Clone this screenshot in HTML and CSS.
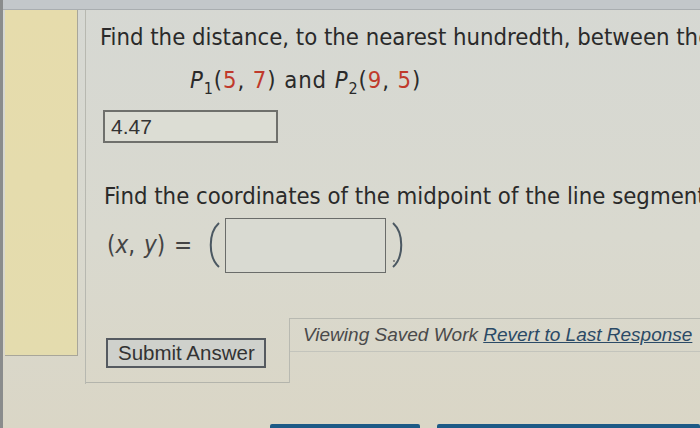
FILE: index.html
```html
<!DOCTYPE html>
<html>
<head>
<meta charset="utf-8">
<link rel="stylesheet" href="styles.css">
</head>
<body>
<div class="page">
  <div class="topbar"></div>
  <div class="main">
    <div class="side"></div>
    <div class="question">
      <p class="q q1">Find the distance, to the nearest hundredth, between the points</p>
      <p class="q points"><i>P</i><sub>1</sub>(<span class="num">5</span>, <span class="num">7</span>) and <i>P</i><sub>2</sub>(<span class="num">9</span>, <span class="num">5</span>)</p>
      <div class="answer">4.47</div>
      <p class="q q2">Find the coordinates of the midpoint of the line segment</p>
      <div class="mid">
        <span class="xy">(<i>x</i>, <i>y</i>) =</span>
        <svg class="paren" width="18" height="48" viewBox="0 0 18 48"><path d="M15 2 C4 12 4 36 15 46" fill="none" stroke="#4b5862" stroke-width="2"/></svg>
        <span class="box"></span>
        <svg class="paren pc" width="18" height="48" viewBox="0 0 18 48"><path d="M3 2 C14 12 14 36 3 46" fill="none" stroke="#4b5862" stroke-width="2"/><circle cx="4" cy="40" r="0.9" fill="#666"/></svg>
      </div>
      <div class="bottom">
        <div class="submitwrap"><span class="submit">Submit Answer</span></div>
        <div class="savedcol">
          <div class="saved"><i>Viewing Saved Work</i> <a class="revert">Revert to Last Response</a></div>
        </div>
      </div>
    </div>
  </div>
  <div class="footer"><span class="tab t1"></span><span class="tab t2"></span></div>
</div>
</body>
</html>
```
FILE: styles.css
```css
html, body { margin: 0; padding: 0; }
body {
  width: 700px; height: 428px; overflow: hidden;
  background: linear-gradient(180deg, #d6d8d3 0%, #d9d9cf 55%, #dad6c6 100%);
  font-family: "DejaVu Sans Condensed", "DejaVu Sans", sans-serif;
  color: #2a2a2a;
}
.page { width: 700px; height: 428px; display: flex; flex-direction: column; border-left: 3px solid #8a8c8c; box-sizing: border-box; }
.topbar { height: 9px; background: #c3c7ca; border-bottom: 1px solid #a9adb0; flex: none; }
.main { display: flex; flex: none; height: 374px; }
.side {
  width: 72px; height: 345px; margin-left: 2px; flex: none;
  background: linear-gradient(180deg, #e6dcac 0%, #e4dcae 100%);
  border-right: 1px solid #a8a69a; border-bottom: 1px solid #a8a69a;
}
.question {
  flex: 1; margin-left: 7px; border-left: 1px solid #b7b8b0;
  padding-left: 14px; white-space: nowrap; overflow: hidden;
}
.q { margin: 0; font-size: 23.7px; line-height: 28px; }
.q1 { margin-top: 13px; }
.points { margin: 15px 0 0 90px; letter-spacing: 0.9px; }
.points sub { font-size: 16px; line-height: 0; }
.num { color: #c0392b; }
.answer {
  margin: 16px 0 0 3px; width: 165px; height: 29px; border: 2px solid #6f706c;
  font-family: "Liberation Sans", Arial, sans-serif; font-size: 21px; line-height: 30px;
  padding-left: 6px; background: #dcddd4; color: #333;
}
.q2 { margin-top: 39px; margin-left: 4px; }
.mid { display: flex; align-items: center; margin: 7px 0 0 7px; height: 56px; }
.xy { font-size: 24px; color: #444; word-spacing: 2px; }
.paren { flex: none; margin-left: 12px; }
.pc { margin-left: 4px; }
.box { width: 159px; height: 53px; border: 1px solid #6a6c6a; margin-left: 3px; background: #d9dad2; flex: none; }
.bottom { display: flex; margin-top: 45px; margin-left: -15px; }
.submitwrap { width: 204px; height: 64px; border-bottom: 1px solid #b3b4ac; }
.submit {
  display: inline-block; margin: 20px 0 0 21px; padding: 2px 9px 2px 10px; border: 2px solid #555a60;
  background: #cfd1cc; font-family: "Liberation Sans", Arial, sans-serif; font-size: 20.5px; line-height: 22px; color: #333;
}
.savedcol { flex: 1; height: 65px; border-left: 1px solid #b8b9b1; }
.saved {
  height: 34px; border-top: 1px solid #b8b9b1; border-bottom: 1px solid #c3c4bc;
  font-family: "Liberation Sans", Arial, sans-serif; font-size: 19px; color: #4a4a4a;
  padding: 5px 0 0 13px; box-sizing: border-box;
}
.revert { color: #2b4a66; text-decoration: underline; font-style: italic; }
.footer { flex: 1; display: flex; align-items: flex-end; padding-left: 267px; gap: 17px; }
.tab { height: 4px; background: #1d5a86; border-radius: 2px 2px 0 0; }
.t1 { width: 150px; }
.t2 { flex: 1; }
```
